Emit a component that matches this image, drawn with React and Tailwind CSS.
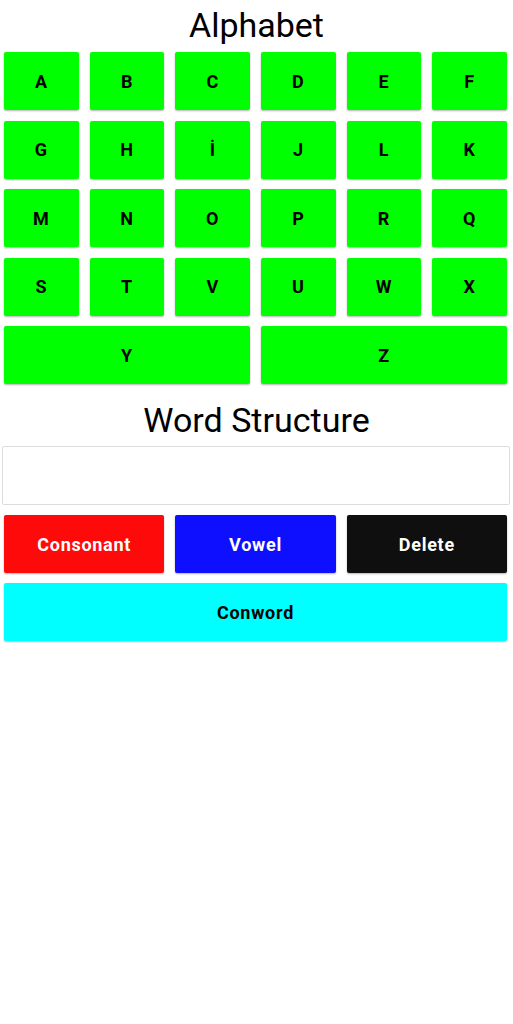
import React, { useState } from 'react';

const LETTERS = ['A', 'B', 'C', 'D', 'E', 'F', 'G', 'H', 'İ', 'J', 'L', 'K', 'M', 'N', 'O', 'P', 'R', 'Q', 'S', 'T', 'V', 'U', 'W', 'X'];

const font = { fontFamily: 'Roboto, "Noto Sans", sans-serif' };

const KeyButton = ({ label, className = '', onClick }) => (
  <button
    onClick={onClick}
    className={`h-[58px] rounded-[2px] shadow-[0_1px_2px_rgba(0,0,0,0.3)] text-[18px] font-bold tracking-[0.04em] ${className}`}
  >
    {label}
  </button>
);

export default function App() {
  const [word, setWord] = useState('');

  return (
    <div className="w-[513px] min-h-[1024px] bg-white" style={font}>
      {/* Alphabet */}
      <h1 className="pt-[5px] pb-[7px] text-center text-[34px] leading-[40px] font-normal text-black">Alphabet</h1>
      <div className="grid grid-cols-6 gap-x-[11px] gap-y-[10.5px] pl-[4px] pr-[6px]">
        {LETTERS.map(l => (
          <KeyButton key={l} label={l} className="bg-[#00ff00] text-black" onClick={() => setWord(w => w + l)} />
        ))}
        <KeyButton label="Y" className="col-span-3 bg-[#00ff00] text-black" onClick={() => setWord(w => w + 'Y')} />
        <KeyButton label="Z" className="col-span-3 bg-[#00ff00] text-black" onClick={() => setWord(w => w + 'Z')} />
      </div>

      {/* Word Structure */}
      <h2 className="pt-[16px] pb-[6px] text-center text-[34px] leading-[40px] font-normal text-black">Word Structure</h2>
      <div className="pl-[2px] pr-[3px]">
        <input
          value={word}
          onChange={e => setWord(e.target.value)}
          className="block w-full h-[59px] border border-[#dcdcdc] rounded-[2px] px-3 text-[18px] outline-none"
        />
      </div>
      <div className="grid grid-cols-3 gap-x-[11px] pl-[4px] pr-[6px] mt-[10px]">
        <KeyButton label="Consonant" className="bg-[#ff0a0a] text-white" />
        <KeyButton label="Vowel" className="bg-[#0f0fff] text-white" />
        <KeyButton label="Delete" className="bg-[#0f0f0f] text-white" onClick={() => setWord(w => w.slice(0, -1))} />
      </div>
      <div className="pl-[4px] pr-[6px] mt-[10px]">
        <KeyButton label="Conword" className="w-full bg-[#00ffff] text-black" />
      </div>
    </div>
  );
}
